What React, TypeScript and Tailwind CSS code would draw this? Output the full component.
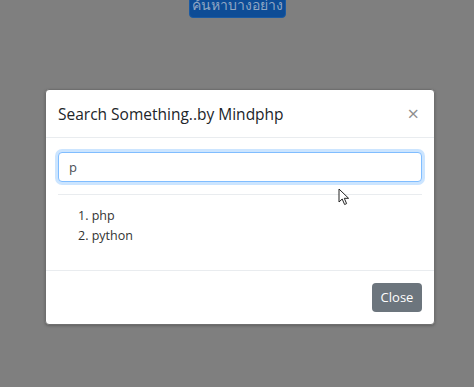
import React, { useState } from 'react';

const items = ['php', 'python'];

function Pointer() {
  return (
    <svg width="12" height="18" viewBox="0 0 12 18" className="absolute left-[338px] top-[188px]">
      <path d="M1 1 L1 14 L4.2 11 L6.6 16.5 L8.6 15.6 L6.3 10.3 L10.6 10.3 Z" fill="#fff" stroke="#222" strokeWidth="1" strokeLinejoin="round" />
    </svg>
  );
}

export default function App() {
  const [query, setQuery] = useState('p');

  const results = items.filter((i) => query && i.startsWith(query.toLowerCase()));

  return (
    <div className="relative w-[474px] h-[387px] overflow-hidden bg-[#7f7f7f] font-['Open_Sans','Noto_Sans',sans-serif] text-[#212529]">
      {/* ปุ่มด้านบน (อยู่หลัง backdrop) */}
      <div className="flex justify-center">
        <div className="-mt-[12px] h-[30px] w-[97px] rounded-[4px] bg-[#0d4c96] border border-[#1a5aa3] flex items-end justify-center pb-[2px] whitespace-nowrap text-[14px] leading-[20px] text-[#8fa6c4] font-['Noto_Sans','DejaVu_Sans',sans-serif]">
          ค้นหาบางอย่าง
        </div>
      </div>

      {/* Modal */}
      <div className="mt-[71px] ml-[45px] w-[390px] bg-white rounded-[4px] border border-[#6f6f6f] shadow-[0_1px_3px_rgba(0,0,0,0.25)]">
        <div className="flex items-center justify-between h-[48px] px-[12px] border-b border-[#e9ecef]">
          <h5 className="text-[15.5px] leading-[24px] font-normal">Search Something..by Mindphp</h5>
          <button className="text-[20px] leading-none text-[#8f8f8f] mr-[3px]">×</button>
        </div>

        <div className="h-[132px] px-[12px] pt-[14px]">
          <input
            value={query}
            onChange={(e) => setQuery(e.target.value)}
            className="block w-full h-[30px] px-[10px] text-[13px] text-[#495057] bg-white border border-[#80bdff] rounded-[4px] outline-none shadow-[0_0_0_3px_rgba(0,123,255,0.2)]"
          />
          <hr className="mt-[12px] border-0 border-t border-[#e9ecef]" />
          <ol className="mt-[11px] pl-[20px] list-decimal list-inside text-[12.5px] leading-[20px] text-[#333]">
            {results.map((r) => (
              <li key={r}>{r}</li>
            ))}
          </ol>
        </div>

        <div className="h-[54px] flex items-center justify-end px-[12px] border-t border-[#e9ecef]">
          <button className="h-[29px] w-[50px] rounded-[4px] bg-[#6c757d] text-white text-[13px]">Close</button>
        </div>
      </div>

      <Pointer />
    </div>
  );
}
